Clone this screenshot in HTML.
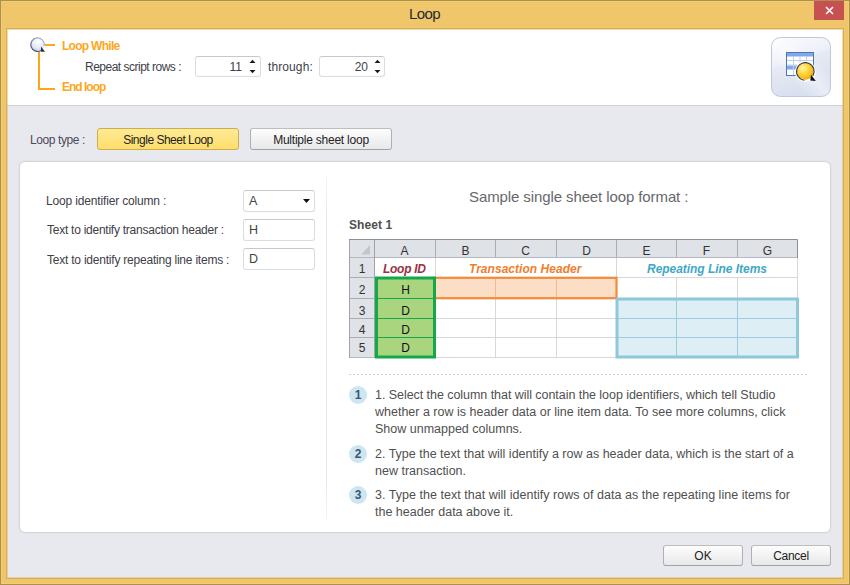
<!DOCTYPE html>
<html><head><meta charset="utf-8">
<style>
*{box-sizing:border-box;margin:0;padding:0}
html,body{width:850px;height:585px;overflow:hidden}
body{position:relative;background:#EFC66A;font-family:"Liberation Sans",sans-serif;font-size:12px;color:#444}
.a{position:absolute}
.t{position:absolute;white-space:nowrap;line-height:14px}
#frame{left:0;top:0;width:850px;height:585px;border:1px solid #AC9050;box-shadow:inset 0 0 0 1px #F4CD70}
#inner{left:6px;top:28px;width:838px;height:551px;border:1px solid #D9AF55;background:#E8E9EE}
#blend{left:7px;top:29px;width:836px;height:549px;border:1px solid rgba(217,175,85,0.45)}
#hdr{left:7px;top:29px;width:836px;height:77px;background:#fff;border-bottom:1px solid #D0D0D7}
#close{left:814px;top:1px;width:30px;height:19px;background:#C75050}
.spin{position:absolute;height:21px;border:1px solid #D9DCE1;border-top-color:#C6C8CD;border-radius:3px;background:#fff}
.btn{position:absolute;border:1px solid #B0B0B0;border-color:#BDBDBD #B0B0B0 #A3A3A3 #B0B0B0;border-radius:3px;background:linear-gradient(#FDFDFD,#E8E8EA);text-align:center;color:#222}
.tb{position:absolute;height:22px;border:1px solid #D9DCE1;border-top-color:#C6C8CD;border-radius:3px;background:#fff}
#panel{left:19px;top:161px;width:812px;height:372px;background:#fff;border:1px solid #D4D6DC;border-radius:6px;box-shadow:0 0 0 0.5px rgba(200,202,208,0.35)}
.circ{width:18px;height:18px;border-radius:50%;background:#CDE6F1;color:#3B5770;font-size:12px;font-weight:bold;text-align:center;line-height:18px}
.ins{font-size:12.5px;line-height:17px;color:#505050;white-space:nowrap}
</style></head><body>
<div class="a" id="frame"></div>
<div class="t" id="title" style="left:409px;top:5px;font-size:15px;line-height:17px;color:#1F2B33;letter-spacing:-0.6px">Loop</div>
<div class="a" id="close"><svg width="30" height="19" style="position:absolute;left:0;top:0"><path d="M12 6 L19 13 M19 6 L12 13" stroke="#fff" stroke-width="1.6"/></svg></div>
<div class="a" id="inner"></div>
<div class="a" id="hdr"></div>

<!-- header loop graphic -->
<svg class="a" style="left:28px;top:35px" width="30" height="58">
  <defs><radialGradient id="cg" cx="0.55" cy="0.3" r="0.75"><stop offset="0" stop-color="#FFFFFF"/><stop offset="0.6" stop-color="#E6ECF7"/><stop offset="1" stop-color="#BFCBE6"/></radialGradient>
  <linearGradient id="rg" x1="0.8" y1="0" x2="0.2" y2="1"><stop offset="0" stop-color="#B4BED6"/><stop offset="1" stop-color="#344360"/></linearGradient></defs>
  <path d="M11 17 V54 H27" fill="none" stroke="#FBA71B" stroke-width="2"/>
  <path d="M17 10 H27" fill="none" stroke="#FBA71B" stroke-width="2"/>
  <circle cx="9.7" cy="9.3" r="6.6" fill="url(#cg)"/>
  <path d="M13.5 15.2 A6.8 6.8 0 1 1 16.3 10.5" fill="none" stroke="url(#rg)" stroke-width="1.2"/>
  <path d="M13 11.6 V16.7 H17 Z" fill="#1E334F"/>
</svg>
<div class="t" id="lw" style="left:62px;top:39px;font-size:12px;font-weight:bold;color:#FBA71B;letter-spacing:-0.72px">Loop While</div>
<div class="t" id="el" style="left:62px;top:80px;font-size:12px;font-weight:bold;color:#FBA71B;letter-spacing:-1px">End loop</div>
<div class="t" id="rsr" style="left:85px;top:60px;font-size:12px;color:#3E3E4A;letter-spacing:-0.5px">Repeat script rows :</div>
<div class="spin" id="sp1" style="left:195px;top:56px;width:66px"></div>
<div class="t" id="v11" style="left:200px;top:60px;width:42px;text-align:right;color:#3E3E4A">11</div>
<svg class="a" style="left:249px;top:59px" width="8" height="16"><path d="M0.5 4 L3.5 0.8 L6.5 4 Z M0.5 11 H6.5 L3.5 14.2 Z" fill="#1A1A1A"/></svg>
<div class="t" id="thr" style="left:268px;top:60px;color:#3E3E4A;letter-spacing:0.1px">through:</div>
<div class="spin" id="sp2" style="left:319px;top:56px;width:66px"></div>
<div class="t" id="v20" style="left:325px;top:60px;width:43px;text-align:right;color:#3E3E4A">20</div>
<svg class="a" style="left:374px;top:59px" width="8" height="16"><path d="M0.5 4 L3.5 0.8 L6.5 4 Z M0.5 11 H6.5 L3.5 14.2 Z" fill="#1A1A1A"/></svg>

<svg class="a" id="bigbtn" style="left:771px;top:37px" width="61" height="61">
 <defs>
  <linearGradient id="bb" x1="0" y1="0" x2="0.35" y2="1"><stop offset="0" stop-color="#FBFCFE"/><stop offset="0.45" stop-color="#EDF0F8"/><stop offset="0.5" stop-color="#E6EAF4"/><stop offset="1" stop-color="#D8DFEF"/></linearGradient>
  <linearGradient id="sh" x1="0" y1="1" x2="1" y2="0"><stop offset="0.3" stop-color="#fff" stop-opacity="0"/><stop offset="0.5" stop-color="#fff" stop-opacity="0.45"/><stop offset="0.7" stop-color="#fff" stop-opacity="0"/></linearGradient>
  <radialGradient id="yg" cx="0.35" cy="0.3" r="0.85"><stop offset="0" stop-color="#FFF4A8"/><stop offset="0.4" stop-color="#FFD83E"/><stop offset="1" stop-color="#F39A00"/></radialGradient>
 </defs>
 <rect x="0.5" y="0.5" width="59" height="59" rx="9" fill="url(#bb)" stroke="#BFC8DB"/>
 <rect x="1" y="1" width="58" height="58" rx="9" fill="url(#sh)"/>
 <rect x="15.5" y="15.5" width="27" height="23" fill="#fff" stroke="#4D77B9"/>
 <rect x="16" y="16" width="26" height="3.5" fill="#7FA9E8"/>
 <rect x="16" y="28.5" width="26" height="3.5" fill="#7FA9E8"/>
 <path d="M22.5 19.5 V38 M29 19.5 V38 M35.5 19.5 V38 M16 23.5 H42 M16 28 H42 M16 32.5 H42" stroke="#C2CEE2" stroke-width="1"/>
 <circle cx="34.4" cy="34.4" r="10.5" fill="#fff" opacity="0.85"/>
 <circle cx="34.4" cy="34.4" r="8.4" fill="url(#yg)"/>
 <path d="M33.4 43.2 A8.8 8.8 0 1 1 42.0 38.8" fill="none" stroke="#3A3A3A" stroke-width="1.1"/>
 <path d="M40 37.8 L44.8 43.9 L39.3 43.6 Z" fill="#111"/>
</svg>

<!-- loop type -->
<div class="t" id="ltype" style="left:30px;top:133px;color:#4A4A58;letter-spacing:-0.4px">Loop type :</div>
<div class="btn" id="b1" style="left:97px;top:128px;width:142px;height:22px;border-color:#CFAE4A;background:linear-gradient(#FDEA95,#FFDE6C);line-height:22px;letter-spacing:-0.5px">Single Sheet Loop</div>
<div class="btn" id="b2" style="left:250px;top:128px;width:142px;height:22px;line-height:22px;letter-spacing:-0.23px">Multiple sheet loop</div>

<div class="a" id="panel"></div>
<div class="a" id="vdiv" style="left:326px;top:177px;width:1px;height:342px;background:linear-gradient(#F4F4F6,#E4E5E9 15%,#E4E5E9 85%,#F4F4F6)"></div>
<div class="t" id="lab1" style="left:46px;top:194px;color:#404048;letter-spacing:-0.16px">Loop identifier column :</div>
<div class="t" id="lab2" style="left:47px;top:223px;color:#404048;letter-spacing:-0.25px">Text to identify transaction header :</div>
<div class="t" id="lab3" style="left:47px;top:253px;color:#404048;letter-spacing:-0.22px">Text to identify repeating line items :</div>
<div class="tb" id="tb1" style="left:243px;top:190px;width:72px;height:22px"></div>
<div class="t" id="tA" style="left:249px;top:194px;font-size:12.5px;color:#444">A</div>
<svg class="a" style="left:303px;top:199px" width="8" height="5"><path d="M0 0 H7 L3.5 4 Z" fill="#111"/></svg>
<div class="tb" id="tb2" style="left:243px;top:219px;width:72px;height:22px"></div>
<div class="t" id="tH" style="left:249px;top:223px;font-size:12.5px;color:#444">H</div>
<div class="tb" id="tb3" style="left:243px;top:248px;width:72px;height:22px"></div>
<div class="t" id="tD" style="left:249px;top:252px;font-size:12.5px;color:#444">D</div>

<div class="t" id="sample" style="left:469px;top:188px;font-size:15px;line-height:17px;color:#67686C;letter-spacing:-0.1px">Sample single sheet loop format :</div>
<div class="t" id="sheet1" style="left:349px;top:218px;font-weight:bold;color:#505050;letter-spacing:0.1px">Sheet 1</div>

<svg class="a" id="tbl" style="left:340px;top:230px" width="470" height="140">
 <g transform="translate(-340,-230)">
  <rect x="350" y="240" width="447" height="17" fill="#DFE2E7"/>
  <rect x="350" y="240" width="24" height="118" fill="#DFE2E7"/>
  <path d="M361 254.5 H370 V245 Z" fill="#C3C7CC"/>
  <!-- body gridlines -->
  <g stroke="#D8D8D8" stroke-width="1">
   <path d="M375 277.5 H797 M375 298.5 H797 M375 318.5 H797 M375 337.5 H797 M375 357.5 H797"/>
   <path d="M435.5 258 V357 M495.5 277 V357 M556.5 277 V357 M616.5 258 V357 M676.5 277 V357 M737.5 277 V357 M797.5 258 V357"/>
  </g>
  <!-- header gridlines -->
  <g stroke="#AAAEB4" stroke-width="1">
   <path d="M435.5 240 V257 M495.5 240 V257 M556.5 240 V257 M616.5 240 V257 M676.5 240 V257 M737.5 240 V257"/>
   <path d="M350 277.5 H374 M350 298.5 H374 M350 318.5 H374 M350 337.5 H374"/>
   <path d="M350 257.5 H797" stroke="#B4B8BE"/>
   <path d="M374.5 240 V358" stroke="#A0A4AA"/>
   <path d="M350 357.5 H374" stroke="#B4B8BE"/>
  </g>
  <path d="M349.5 358 V239.5" fill="none" stroke="#A2A5AA" stroke-width="1"/><path d="M349 239.5 H797.5 V258" fill="none" stroke="#8C8F94" stroke-width="1"/>
  <!-- orange -->
  <rect x="433" y="277.8" width="183.5" height="20.4" fill="#FCDDC6" stroke="#F28A3A" stroke-width="2.2"/>
  <path d="M495.5 279 V297 M556.5 279 V297" stroke="#F7B88C" stroke-width="1"/>
  <!-- green -->
  <rect x="376.5" y="278" width="58" height="79" fill="#AAD57F" stroke="#14A84B" stroke-width="3"/>
  <path d="M377 298.5 H434 M377 318.5 H434 M377 337.5 H434" stroke="#14A84B" stroke-width="1"/>
  <!-- blue -->
  <rect x="617" y="299" width="180.5" height="58" fill="#DDEEF5" stroke="#8DC8DB" stroke-width="3"/>
  <path d="M618 318.5 H796 M618 337.5 H796 M676.5 300 V356 M737.5 300 V356" stroke="#9ACDDD" stroke-width="1"/>
 </g>
</svg>
<div class="t" style="left:374px;top:244px;width:61px;text-align:center;color:#333">A</div>
<div class="t" style="left:435px;top:244px;width:61px;text-align:center;color:#333">B</div>
<div class="t" style="left:495px;top:244px;width:61px;text-align:center;color:#333">C</div>
<div class="t" style="left:556px;top:244px;width:61px;text-align:center;color:#333">D</div>
<div class="t" style="left:616px;top:244px;width:61px;text-align:center;color:#333">E</div>
<div class="t" style="left:676px;top:244px;width:61px;text-align:center;color:#333">F</div>
<div class="t" style="left:737px;top:244px;width:61px;text-align:center;color:#333">G</div>
<div class="t" style="left:350px;top:262px;width:24px;text-align:center;color:#333">1</div>
<div class="t" style="left:350px;top:283px;width:24px;text-align:center;color:#333">2</div>
<div class="t" style="left:350px;top:304px;width:24px;text-align:center;color:#333">3</div>
<div class="t" style="left:350px;top:323px;width:24px;text-align:center;color:#333">4</div>
<div class="t" style="left:350px;top:341px;width:24px;text-align:center;color:#333">5</div>
<div class="t" id="loopid" style="left:383px;top:262px;font-weight:bold;font-style:italic;color:#9B2F3F;letter-spacing:-0.28px">Loop ID</div>
<div class="t" id="trh" style="left:469px;top:262px;font-weight:bold;font-style:italic;color:#EF7E2C;letter-spacing:0.04px">Transaction Header</div>
<div class="t" id="rli" style="left:647px;top:262px;font-weight:bold;font-style:italic;color:#3FA7C6;letter-spacing:-0.04px">Repeating Line Items</div>
<div class="t" style="left:376px;top:283px;width:59px;text-align:center;color:#111">H</div>
<div class="t" style="left:376px;top:304px;width:59px;text-align:center;color:#111">D</div>
<div class="t" style="left:376px;top:323px;width:59px;text-align:center;color:#111">D</div>
<div class="t" style="left:376px;top:341px;width:59px;text-align:center;color:#111">D</div>

<div class="a" id="dash" style="left:349px;top:374px;width:459px;height:1px;background:repeating-linear-gradient(90deg,#CDCDD0 0 2px,transparent 2px 4px)"></div>

<div class="a circ" style="left:349px;top:386px">1</div>
<div class="a circ" style="left:349px;top:445px">2</div>
<div class="a circ" style="left:349px;top:486px">3</div>
<div class="a ins" id="ins1" style="left:375px;top:387px"><div style="letter-spacing:-0.05px">1. Select the column that will contain the loop identifiers, which tell Studio</div><div>whether a row is header data or line item data. To see more columns, click</div><div>Show unmapped columns.</div></div>
<div class="a ins" id="ins2" style="left:375px;top:446px"><div>2. Type the text that will identify a row as header data, which is the start of a</div><div>new transaction.</div></div>
<div class="a ins" id="ins3" style="left:375px;top:487px"><div style="letter-spacing:0.03px">3. Type the text that will identify rows of data as the repeating line items for</div><div>the header data above it.</div></div>


<!-- OK/Cancel -->
<div class="btn" id="ok" style="left:663px;top:545px;width:80px;height:21px;line-height:21px">OK</div>
<div class="btn" id="cancel" style="left:751px;top:545px;width:80px;height:21px;line-height:21px;letter-spacing:-0.3px">Cancel</div>
<div class="a" id="blend"></div>
</body></html>
